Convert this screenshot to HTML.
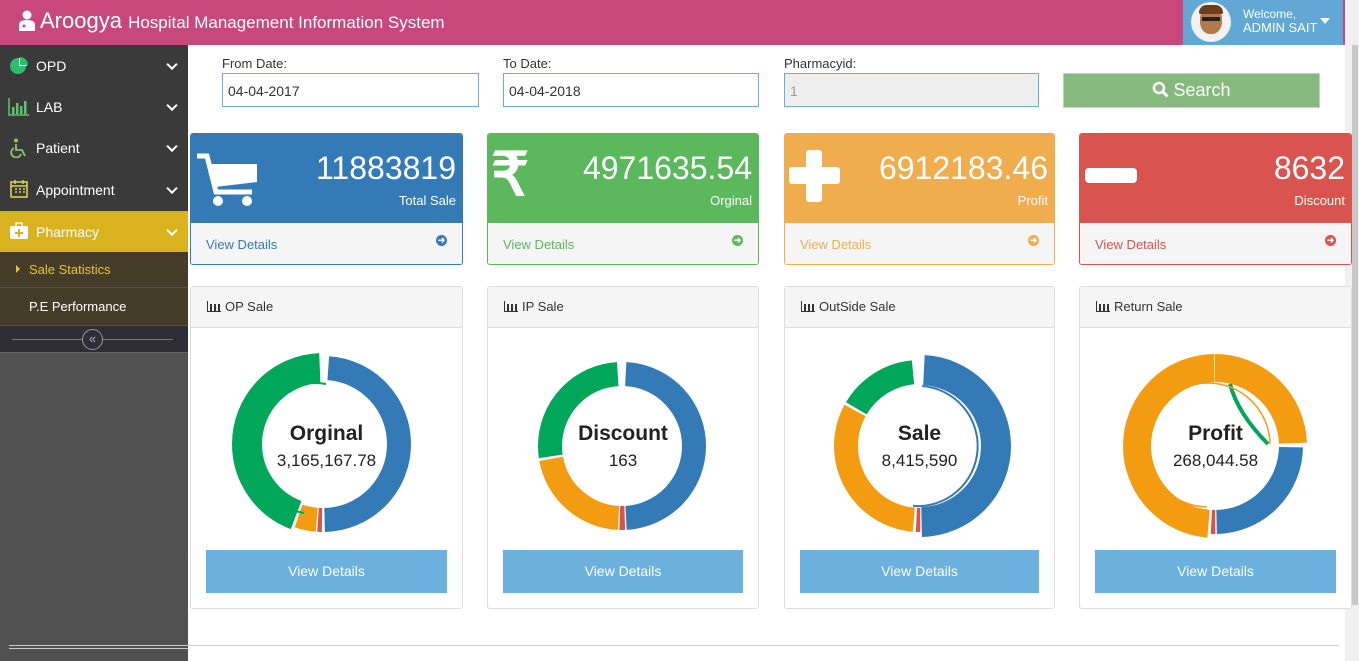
<!DOCTYPE html>
<html><head><meta charset="utf-8"><style>
*{box-sizing:border-box;margin:0;padding:0}
body{width:1359px;height:661px;overflow:hidden;background:#fff;font-family:"Liberation Sans",sans-serif;position:relative;color:#333}
.a{position:absolute}
.hdr{left:0;top:0;width:1359px;height:45px;background:#c8487c}
.side{left:0;top:45px;width:188px;height:616px;background:#515151}
.mi{position:absolute;left:0;width:188px;color:#fff;font-size:14px;display:flex;align-items:center;padding-left:36px;background:#3a3a3a}
.chev{position:absolute;right:12px;top:50%;width:8px;height:8px;border-right:2px solid #fff;border-bottom:2px solid #fff;transform:translateY(-70%) rotate(45deg)}
.lbl{font-size:13px;color:#333}
.inp{height:34px;border:1px solid #6aaedc;font-size:14px;padding:9px 5px;color:#333}
.box{border-radius:3px;overflow:hidden}
.box .top{position:absolute;left:0;top:0;right:0;height:89px}
.box .num{position:absolute;right:6px;top:16px;font-size:32px;color:#fff}
.box .sub{position:absolute;right:6px;top:59px;font-size:13px;color:#fff}
.box .bot{position:absolute;left:0;right:0;top:89px;bottom:0;background:#f5f5f5}
.box .vd{position:absolute;left:15px;top:14px;font-size:13px}
.box .ic{position:absolute;right:15px;top:12px;width:11px;height:11px;border-radius:50%;color:#fff;font-size:9px;line-height:11px;text-align:center;font-weight:bold}
.pn{border:1px solid #ddd;border-radius:3px;background:#fff}
.pn .ph{position:absolute;left:0;top:0;right:0;height:41px;background:#f5f5f5;border-bottom:1px solid #ddd;font-size:13px;padding:12px 0 0 34px}
.pn .bi{position:absolute;left:16px;top:14px;width:14px;height:11px;border-left:1.5px solid #333;border-bottom:1.5px solid #333;background:linear-gradient(90deg,transparent 2px,#333 2px,#333 4px,transparent 4px,transparent 6px,#333 6px,#333 8px,transparent 8px,transparent 10px,#333 10px,#333 12px,transparent 12px) bottom/100% 7px no-repeat}
.pn .btn{position:absolute;left:15px;right:15px;top:263px;height:43px;background:#6cb1de;color:#fff;font-size:14px;text-align:center;line-height:43px}
.ct{position:absolute;left:0;right:0;text-align:center;color:#222}
.ct b{display:block;font-size:21px;font-weight:bold}
.ct span{display:block;font-size:17px;margin-top:5px}
</style></head><body>
<div class="a hdr"></div>
<svg class="a" style="left:18px;top:10px" width="18" height="22" viewBox="0 0 18 22"><circle cx="9" cy="5" r="4.5" fill="#fff"/><path d="M1 21v-6q0-5 8-5t8 5v6z" fill="#fff"/><circle cx="6" cy="16" r="1.5" fill="#c8487c"/></svg>
<div class="a" style="left:40px;top:8px;color:#fff;font-size:22px">Aroogya <span style="font-size:17px">Hospital Management Information System</span></div>
<div class="a" style="left:1183px;top:0;width:160px;height:45px;background:#62a8d4"></div>
<div class="a" style="left:1191px;top:2px;width:40px;height:40px;border-radius:50%;background:#f2f2f2;overflow:hidden"><div style="position:absolute;left:9px;top:5px;width:22px;height:27px;border-radius:45%;background:#b07a4a"></div><div style="position:absolute;left:8px;top:3px;width:24px;height:9px;border-radius:10px 10px 2px 2px;background:#6b3f1e"></div><div style="position:absolute;left:11px;top:15px;width:18px;height:4px;background:#222"></div></div>
<div class="a" style="left:1243px;top:7px;color:#fff;font-size:12px;line-height:14px">Welcome,<br><span style="font-size:13px">ADMIN SAIT</span></div>
<div class="a" style="left:1320px;top:18px;border-left:5px solid transparent;border-right:5px solid transparent;border-top:6px solid #fff"></div>
<div class="a" style="left:1345px;top:0;width:14px;height:661px;background:#f0f0f0"></div>
<div class="a" style="left:1352px;top:45px;width:6px;height:560px;background:#c8c8c8"></div>

<div class="a side"></div>
<div class="mi" style="top:45px;height:41px">OPD<i class="chev"></i></div>
<div class="mi" style="top:86px;height:41px">LAB<i class="chev"></i></div>
<div class="mi" style="top:127px;height:41px">Patient<i class="chev"></i></div>
<div class="mi" style="top:168px;height:43px">Appointment<i class="chev"></i></div>
<div class="mi" style="top:211px;height:41px;background:#d9b31f">Pharmacy<i class="chev"></i></div>
<div class="mi" style="top:252px;height:36px;background:#463d28;color:#e8c430;font-size:13px;padding-left:29px;border-bottom:1px solid #5a5040">Sale Statistics</div>
<div class="a" style="left:16px;top:265px;border-top:4px solid transparent;border-bottom:4px solid transparent;border-left:4px solid #e8c430"></div>
<div class="mi" style="top:288px;height:37px;background:#463d28;font-size:13px;padding-left:29px">P.E Performance</div>
<div class="a" style="left:0;top:325px;width:188px;height:28px;background:#2f2d35;border-top:1px solid #555;border-bottom:1px solid #666"></div>
<div class="a" style="left:12px;top:339px;width:161px;height:1px;background:#777"></div>
<div class="a" style="left:82px;top:329px;width:21px;height:21px;border-radius:50%;border:1px solid #999;background:#2f2d35;color:#aac;font-size:13px;text-align:center;line-height:18px">«</div>
<svg class="a" style="left:9px;top:56px" width="20" height="20"><circle cx="9" cy="10" r="8" fill="#2ebd6b"/><path d="M10 2v8h8A8 8 0 0 0 10 2z" fill="#fff" opacity=".9"/><path d="M11 1v8h8A8 8 0 0 0 11 1z" fill="#2ebd6b"/></svg>
<svg class="a" style="left:8px;top:98px" width="22" height="18"><path d="M1 0v17h20" stroke="#5cc46a" stroke-width="1.5" fill="none"/><rect x="4" y="9" width="2.5" height="7" fill="#5cc46a"/><rect x="8" y="5" width="2.5" height="11" fill="#5cc46a"/><rect x="12" y="8" width="2.5" height="8" fill="#5cc46a"/><rect x="16" y="3" width="2.5" height="13" fill="#5cc46a"/></svg>
<svg class="a" style="left:10px;top:138px" width="18" height="20"><circle cx="6" cy="2.5" r="2" fill="#8cc66a"/><path d="M6 6v6h6l3 6M4 10a5 5 0 1 0 7 6" stroke="#8cc66a" stroke-width="1.8" fill="none"/></svg>
<svg class="a" style="left:10px;top:179px" width="18" height="19"><rect x="1" y="3" width="16" height="15" fill="none" stroke="#d8d050" stroke-width="1.6"/><path d="M1 7h16M5 10h2M9 10h2M13 10h2M5 13h2M9 13h2M13 13h2M5 1v4M13 1v4" stroke="#d8d050" stroke-width="1.6"/></svg>
<svg class="a" style="left:9px;top:222px" width="20" height="18"><rect x="1" y="4" width="18" height="13" rx="2" fill="#fff"/><rect x="7" y="1" width="6" height="4" fill="none" stroke="#fff" stroke-width="1.5"/><path d="M10 7v8M6 11h8" stroke="#d9b31f" stroke-width="2"/></svg>

<div class="a lbl" style="left:222px;top:56px">From Date:</div>
<div class="a inp" style="left:222px;top:73px;width:257px">04-04-2017</div>
<div class="a lbl" style="left:503px;top:56px">To Date:</div>
<div class="a inp" style="left:503px;top:73px;width:256px">04-04-2018</div>
<div class="a lbl" style="left:784px;top:56px">Pharmacyid:</div>
<div class="a inp" style="left:784px;top:73px;width:255px;background:#eee;color:#999">1</div>
<div class="a" style="left:1063px;top:73px;width:257px;height:35px;background:#86b97d;border:1px solid #ccc;color:#fff;font-size:18px;text-align:center;line-height:33px"><svg width="17" height="17" style="vertical-align:-2px;margin-right:4px"><circle cx="7" cy="7" r="5" stroke="#fff" stroke-width="2.5" fill="none"/><path d="M11 11l4.5 4.5" stroke="#fff" stroke-width="3"/></svg>Search</div>

<div class="a box" style="left:190px;top:133px;width:273px;height:132px;border:1px solid #337ab7"><div class="top" style="background:#337ab7"></div>
<svg class="a" style="left:4px;top:18px" width="66" height="56"><path d="M2 4h10l9 36h36" stroke="#fff" stroke-width="5" fill="none"/><path d="M14 12h48v18l-42 5z" fill="#fff"/><circle cx="23" cy="49" r="5" fill="#fff"/><circle cx="52" cy="49" r="5" fill="#fff"/></svg>
<div class="num">11883819</div><div class="sub">Total Sale</div><div class="bot"><div class="vd" style="color:#337ab7">View Details</div><div class="ic" style="background:#337ab7">➜</div></div></div>

<div class="a box" style="left:487px;top:133px;width:272px;height:132px;border:1px solid #5cb85c"><div class="top" style="background:#5cb85c"></div>
<div class="a" style="left:3px;top:6px;color:#fff;font-size:60px;font-weight:bold;line-height:70px">₹</div>
<div class="num">4971635.54</div><div class="sub">Orginal</div><div class="bot"><div class="vd" style="color:#5cb85c">View Details</div><div class="ic" style="background:#5cb85c">➜</div></div></div>

<div class="a box" style="left:784px;top:133px;width:271px;height:132px;border:1px solid #f0ad4e"><div class="top" style="background:#f0ad4e"></div>
<div class="a" style="left:21px;top:16px;width:16px;height:52px;background:#fff;border-radius:3px"></div><div class="a" style="left:4px;top:33px;width:51px;height:17px;background:#fff;border-radius:3px"></div>
<div class="num">6912183.46</div><div class="sub">Profit</div><div class="bot"><div class="vd" style="color:#f0ad4e">View Details</div><div class="ic" style="background:#f0ad4e">➜</div></div></div>

<div class="a box" style="left:1079px;top:133px;width:273px;height:132px;border:1px solid #d9534f"><div class="top" style="background:#d9534f"></div>
<div class="a" style="left:5px;top:34px;width:52px;height:15px;background:#fff;border-radius:4px"></div>
<div class="num">8632</div><div class="sub">Discount</div><div class="bot"><div class="vd" style="color:#d9534f">View Details</div><div class="ic" style="background:#d9534f">➜</div></div></div>

<div class="a pn" style="left:190px;top:286px;width:273px;height:323px"><div class="ph"><i class="bi"></i>OP Sale</div><div class="btn">View Details</div><div class="ct" style="top:135px"><b>Orginal</b><span>3,165,167.78</span></div></div>
<div class="a pn" style="left:487px;top:286px;width:272px;height:323px"><div class="ph"><i class="bi"></i>IP Sale</div><div class="btn">View Details</div><div class="ct" style="top:135px"><b>Discount</b><span>163</span></div></div>
<div class="a pn" style="left:784px;top:286px;width:271px;height:323px"><div class="ph"><i class="bi"></i>OutSide Sale</div><div class="btn">View Details</div><div class="ct" style="top:135px"><b>Sale</b><span>8,415,590</span></div></div>
<div class="a pn" style="left:1079px;top:286px;width:273px;height:323px"><div class="ph"><i class="bi"></i>Return Sale</div><div class="btn">View Details</div><div class="ct" style="top:135px"><b>Profit</b><span>268,044.58</span></div></div>

<svg class="a" style="left:0;top:0;pointer-events:none" width="1359" height="661">
<g fill="none" stroke-width="24">
<g transform="rotate(-90 323 444)">
<circle cx="323" cy="444" r="76" pathLength="360" stroke="#337ab7" stroke-dasharray="175 360" stroke-dashoffset="-4"/>
<circle cx="323" cy="444" r="76" pathLength="360" stroke="#d9534f" stroke-dasharray="3 360" stroke-dashoffset="-181"/>
<circle cx="323" cy="444" r="76" pathLength="360" stroke="#f39c12" stroke-dasharray="14 360" stroke-dashoffset="-185"/>
<circle cx="323" cy="444" r="76" pathLength="360" stroke="#00a65a" stroke-width="30" stroke-dasharray="157 360" stroke-dashoffset="-201"/>
</g>
<g transform="rotate(-90 622 446)">
<circle cx="622" cy="446" r="72" pathLength="360" stroke="#337ab7" stroke-dasharray="174 360" stroke-dashoffset="-3"/>
<circle cx="622" cy="446" r="72" pathLength="360" stroke="#d9534f" stroke-dasharray="4 360" stroke-dashoffset="-178"/>
<circle cx="622" cy="446" r="72" pathLength="360" stroke="#f39c12" stroke-dasharray="77 360" stroke-dashoffset="-183"/>
<circle cx="622" cy="446" r="72" pathLength="360" stroke="#00a65a" stroke-dasharray="95 360" stroke-dashoffset="-262"/>
</g>
<g transform="rotate(-90 920 446)">
<circle cx="920" cy="446" r="76" pathLength="360" stroke="#337ab7" stroke-width="30" stroke-dasharray="176 360" stroke-dashoffset="-3"/>
<circle cx="920" cy="446" r="74" pathLength="360" stroke="#d9534f" stroke-dasharray="3 360" stroke-dashoffset="-180"/>
<circle cx="920" cy="446" r="74" pathLength="360" stroke="#f39c12" stroke-dasharray="114 360" stroke-dashoffset="-185"/>
<circle cx="920" cy="446" r="74" pathLength="360" stroke="#00a65a" stroke-dasharray="54 360" stroke-dashoffset="-301"/>
</g>
<g transform="rotate(-90 1215 446)">
<circle cx="1215" cy="446" r="76" pathLength="360" stroke="#337ab7" stroke-dasharray="88 360" stroke-dashoffset="-91"/>
<circle cx="1215" cy="446" r="76" pathLength="360" stroke="#d9534f" stroke-dasharray="3 360" stroke-dashoffset="-180"/>
<circle cx="1215" cy="446" r="78" pathLength="360" stroke="#f39c12" stroke-width="28" stroke-dasharray="175 360" stroke-dashoffset="-185"/>
<circle cx="1215" cy="446" r="78" pathLength="360" stroke="#f39c12" stroke-width="28" stroke-dasharray="88 360" stroke-dashoffset="0"/>
</g>
</g>
<path d="M1230 384q8 30 38 60" stroke="#00a65a" stroke-width="4" fill="none"/>
<path d="M304 513A60 60 0 0 1 326 384" stroke="#00a65a" stroke-width="2" fill="none"/>
<path d="M922 386A60 60 0 0 1 913 506" stroke="#337ab7" stroke-width="2" fill="none"/>
<path d="M1207 507A62 62 0 1 1 1270 444" stroke="#f39c12" stroke-width="1.5" fill="none"/>
</svg>

<div class="a" style="left:9px;top:645px;width:1330px;height:1px;background:#ccc"></div>
<div class="a" style="left:9px;top:648px;width:179px;height:1px;background:#ccc"></div>
</body></html>
